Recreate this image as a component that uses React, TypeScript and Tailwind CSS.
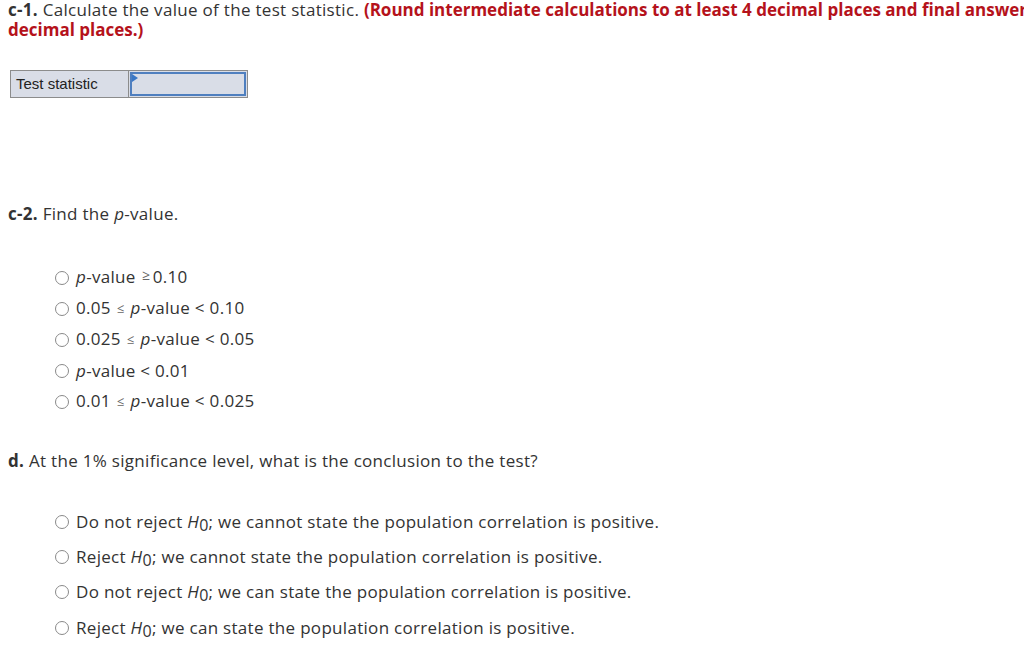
import React from "react";

const Radio = () => (
  <span className="inline-block w-[14px] h-[14px] rounded-full border border-[#8a8a8a] bg-white shrink-0 mr-[7px]" />
);

const P = () => <i className="italic">p</i>;

const H0 = () => (
  <span>
    <i className="italic">H</i>
    <span className="relative top-[3px] text-[16px]">0</span>
  </span>
);

const Le = () => <span className="text-[#666] text-[13px] mx-[6px] relative top-[-1px]">≤</span>;

export default function App() {
  const pOpts: React.ReactNode[] = [
    <>
      <P />-value <span className="text-[#666] text-[14px] relative top-[-3px] mx-[2px]">≥</span>0.10
    </>,
    <>
      0.05<Le />
      <P />-value &lt; 0.10
    </>,
    <>
      0.025<Le />
      <P />-value &lt; 0.05
    </>,
    <>
      <P />-value &lt; 0.01
    </>,
    <>
      0.01<Le />
      <P />-value &lt; 0.025
    </>,
  ];
  const dOpts: React.ReactNode[] = [
    <>Do not reject <H0 />; we cannot state the population correlation is positive.</>,
    <>Reject <H0 />; we cannot state the population correlation is positive.</>,
    <>Do not reject <H0 />; we can state the population correlation is positive.</>,
    <>Reject <H0 />; we can state the population correlation is positive.</>,
  ];
  return (
    <div
      className="w-[1024px] h-[656px] overflow-hidden bg-white text-[#333] text-[17px] tracking-[0.3px]"
      style={{ fontFamily: '"Open Sans", Arial, sans-serif' }}
    >
      <div className="w-[1090px] pl-[8px] leading-[20px]">
        <p>
          <b className="font-bold">c-1.</b> Calculate the value of the test statistic.{" "}
          <b className="font-bold text-[#b5121b] tracking-normal">
            (Round intermediate calculations to at least 4 decimal places and final answer to 3 decimal places.)
          </b>
        </p>
      </div>
      <div className="ml-[10px] mt-[30px] flex w-[238px] h-[28px] border border-[#8c8c8c] bg-[#d9dde7] tracking-normal">
        <div
          className="w-[118px] border-r border-[#8c8c8c] pl-[5px] text-[15px] leading-[26px] text-[#222]"
          style={{ fontFamily: '"Liberation Sans", Arial, sans-serif' }}
        >
          Test statistic
        </div>
        <div className="relative flex-1 m-[1px] border-2 border-[#4f7fbf] bg-[#d9dde7]">
          <span className="absolute left-0 top-0 w-0 h-0 border-t-[4px] border-b-[4px] border-l-[6px] border-t-transparent border-b-transparent border-l-[#3b78c6]" />
        </div>
      </div>
      <p className="mt-[105px] pl-[8px] leading-[21px]">
        <b className="font-bold">c-2.</b> Find the <P />-value.
      </p>
      <div className="mt-[38px] pl-[55px] flex flex-col">
        {pOpts.map((o, i) => (
          <div key={i} className="flex items-center h-[31px]">
            <Radio />
            <span className="leading-[20px]">{o}</span>
          </div>
        ))}
      </div>
      <p className="mt-[33px] pl-[8px] leading-[21px]">
        <b className="font-bold">d.</b> At the 1% significance level, what is the conclusion to the test?
      </p>
      <div className="mt-[33px] pl-[55px] flex flex-col">
        {dOpts.map((o, i) => (
          <div key={i} className="flex items-center h-[35.3px]">
            <Radio />
            <span className="leading-[20px]">{o}</span>
          </div>
        ))}
      </div>
    </div>
  );
}
